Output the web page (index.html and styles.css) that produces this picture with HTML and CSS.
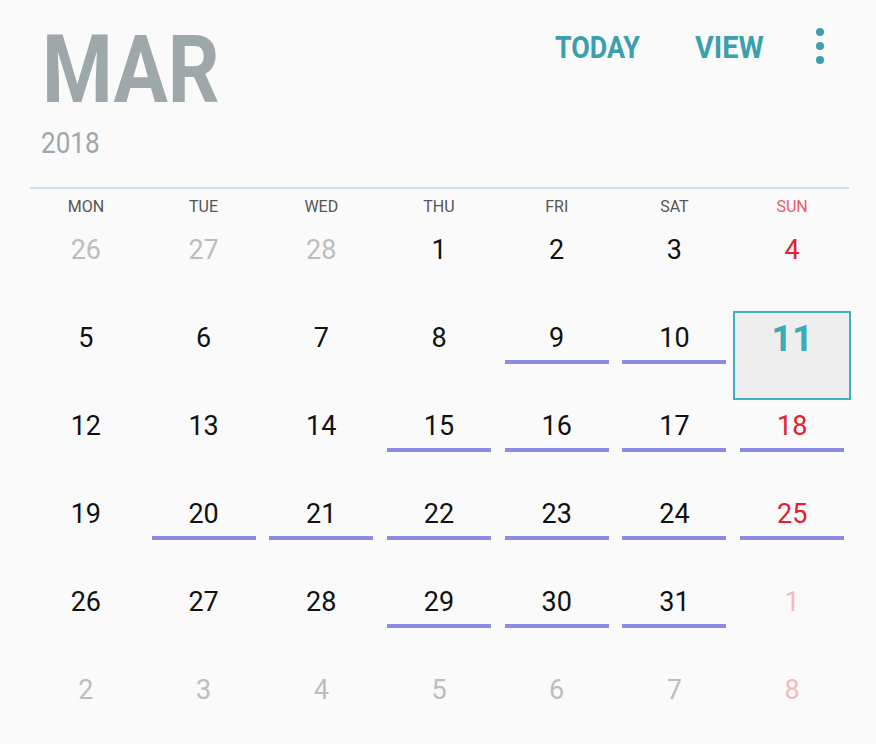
FILE: index.html
```html
<!DOCTYPE html>
<html lang="en">
<head>
    <meta charset="UTF-8">
    <meta name="viewport" content="width=device-width, initial-scale=1.0">
    <title>Calendar - March 2018</title>
    <link rel="stylesheet" href="styles.css">
</head>
<body>

    <div class="calendar">
        <div class="header">
            <div class="title">
                <div class="month"><span>MAR</span></div>
                <div class="year"><span>2018</span></div>
            </div>
            <div class="actions">
                <div class="action today-btn"><span>TODAY</span></div>
                <div class="action view-btn"><span>VIEW</span></div>
                <div class="more"><i></i><i></i><i></i></div>
            </div>
        </div>

        <div class="divider"></div>

        <div class="weekdays">
            <span>MON</span><span>TUE</span><span>WED</span><span>THU</span><span>FRI</span><span>SAT</span><span class="sun">SUN</span>
        </div>

        <div class="days">
            <div class="day other">26</div>
            <div class="day other">27</div>
            <div class="day other">28</div>
            <div class="day">1</div>
            <div class="day">2</div>
            <div class="day">3</div>
            <div class="day sun">4</div>

            <div class="day">5</div>
            <div class="day">6</div>
            <div class="day">7</div>
            <div class="day">8</div>
            <div class="day ev">9</div>
            <div class="day ev">10</div>
            <div class="day today">11</div>

            <div class="day">12</div>
            <div class="day">13</div>
            <div class="day">14</div>
            <div class="day ev">15</div>
            <div class="day ev">16</div>
            <div class="day ev">17</div>
            <div class="day sun ev">18</div>

            <div class="day">19</div>
            <div class="day ev">20</div>
            <div class="day ev">21</div>
            <div class="day ev">22</div>
            <div class="day ev">23</div>
            <div class="day ev">24</div>
            <div class="day sun ev">25</div>

            <div class="day">26</div>
            <div class="day">27</div>
            <div class="day">28</div>
            <div class="day ev">29</div>
            <div class="day ev">30</div>
            <div class="day ev">31</div>
            <div class="day sun other">1</div>

            <div class="day other">2</div>
            <div class="day other">3</div>
            <div class="day other">4</div>
            <div class="day other">5</div>
            <div class="day other">6</div>
            <div class="day other">7</div>
            <div class="day sun other">8</div>
        </div>
    </div>

</body>
</html>
```

FILE: styles.css
```css
body {
    font-family: 'Roboto', 'Noto Sans', sans-serif;
    background: #fafafa;
    margin: 0;
    padding: 0;
    overflow: hidden;
}

.calendar {
    padding: 0 25px 0 27px;
}

.header {
    display: flex;
    justify-content: space-between;
    height: 187px;
}

.title {
    padding-top: 23px;
    padding-left: 15px;
}

.month {
    font-size: 94px;
    font-weight: 700;
    line-height: 1;
    color: #9ea7aa;
}

/* the original font is a condensed face, so squeeze Roboto a bit */
.month span,
.year span,
.action span {
    display: inline-block;
    transform: scaleX(0.86);
    transform-origin: left center;
}

.year {
    margin-top: 12px;
    margin-left: -1px;
    font-size: 29px;
    line-height: 1;
    color: #9ea7aa;
}

.year span {
    transform: scaleX(0.9);
}

.actions {
    display: flex;
    align-items: flex-start;
    padding-top: 31px;
    padding-right: 27px;
}

.action {
    font-size: 32px;
    font-weight: 700;
    line-height: 1;
    color: #3aa0ae;
    white-space: nowrap;
}

.today-btn {
    width: 140px;
}

.today-btn span {
    transform: scaleX(0.84);
}

.view-btn {
    width: 121px;
}

.view-btn span {
    transform: scaleX(0.9);
}

.more {
    display: flex;
    flex-direction: column;
    gap: 6px;
    margin-top: -3px;
}

.more i {
    width: 8px;
    height: 8px;
    border-radius: 50%;
    background: #3aa0ae;
}

.divider {
    height: 2px;
    margin: 0 2px 0 3px;
    background: #bfe4e5;
}

.weekdays {
    display: grid;
    grid-template-columns: repeat(7, 1fr);
    height: 35px;
    line-height: 35px;
    font-size: 16px;
    color: #555;
    text-align: center;
}

.weekdays .sun {
    color: #ea5a66;
}

.days {
    display: grid;
    grid-template-columns: repeat(7, 1fr);
    grid-auto-rows: 88px;
}

.day {
    display: flex;
    flex-direction: column;
    align-items: center;
    padding-top: 10px;
    font-size: 27px;
    line-height: 32px;
    color: #111;
    box-sizing: border-box;
}

.day.sun {
    color: #e3202e;
}

.day.other {
    color: #bdbdbd;
}

.day.sun.other {
    color: #f6b8bc;
}

.day.ev::after {
    content: "";
    width: 104px;
    height: 4px;
    margin-top: 6px;
    background: #8b8be3;
}

.day.today {
    margin-top: -1px;
    padding-top: 10px;
    border: 2px solid #3fb0bc;
    background: #eeeeee;
    font-size: 36px;
    font-weight: 700;
    color: #3aabb8;
}
```
